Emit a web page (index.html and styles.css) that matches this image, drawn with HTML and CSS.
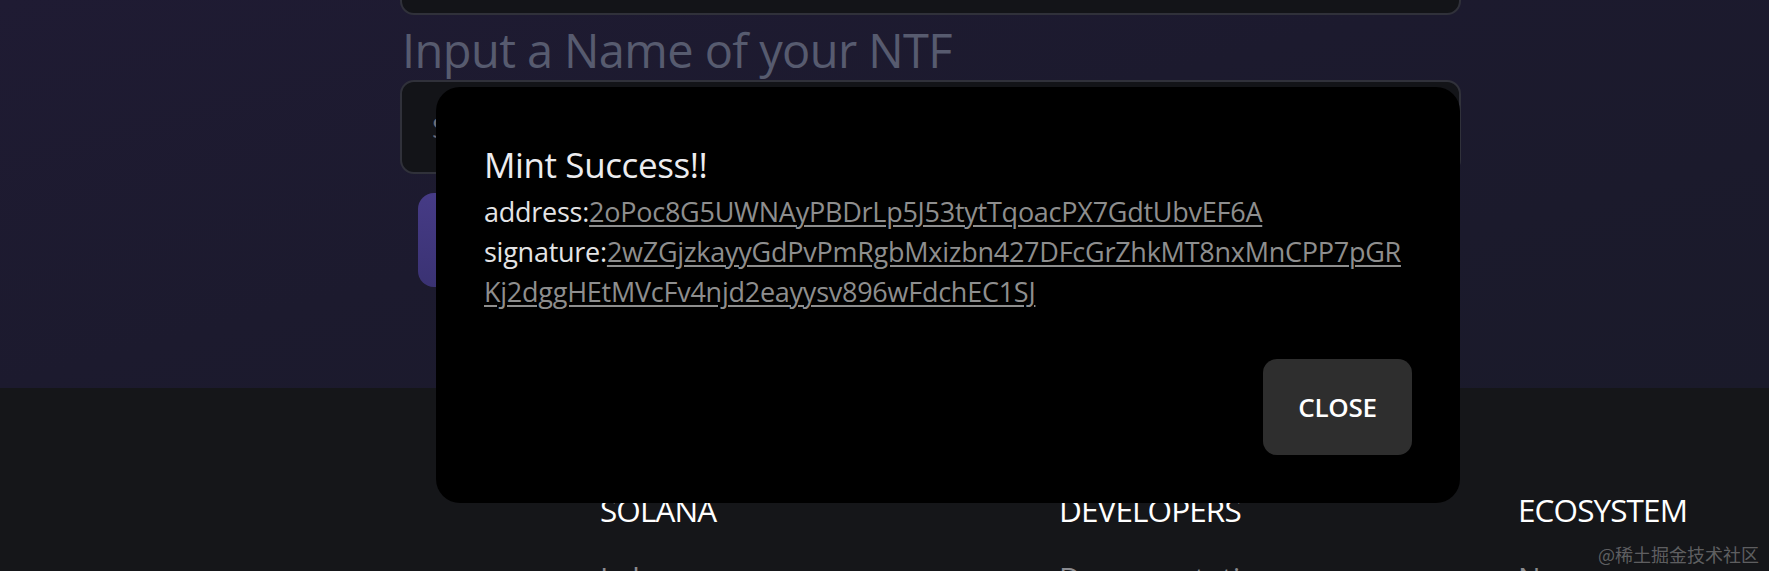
FILE: index.html
```html
<!DOCTYPE html>
<html lang="en">
<head>
<meta charset="utf-8">
<title>Mint NFT</title>
<link rel="stylesheet" href="styles.css">
</head>
<body>
<div class="page">
  <section class="hero">
    <div class="form">
      <div class="field field-top"></div>
      <label class="label">Input a Name of your NTF</label>
      <div class="field field-name"><span class="placeholder">SolanaNFT</span></div>
      <button class="mint-btn">MINT</button>
    </div>
  </section>
  <footer class="footer">
    <div class="cols">
      <div class="col">
        <h3 class="col-title">SOLANA</h3>
        <a class="col-link">Labs</a>
      </div>
      <div class="col">
        <h3 class="col-title">DEVELOPERS</h3>
        <a class="col-link">Documentation</a>
      </div>
      <div class="col">
        <h3 class="col-title">ECOSYSTEM</h3>
        <a class="col-link">News</a>
      </div>
    </div>
  </footer>
  <div class="dialog">
    <div class="dialog-body">
      <h2 class="dialog-title">Mint Success!!</h2>
      <p class="row">address:<a class="hash">2oPoc8G5UWNAyPBDrLp5J53tytTqoacPX7GdtUbvEF6A</a></p>
      <p class="row">signature:<a class="hash">2wZGjzkayyGdPvPmRgbMxizbn427DFcGrZhkMT8nxMnCPP7pGRKj2dggHEtMVcFv4njd2eayysv896wFdchEC1SJ</a></p>
    </div>
    <div class="dialog-actions">
      <button class="close-btn">CLOSE</button>
    </div>
  </div>
  <div class="watermark">@稀土掘金技术社区</div>
</div>
</body>
</html>
```
FILE: styles.css
```css
* { box-sizing: border-box; }
html, body { margin: 0; padding: 0; }
body {
  width: 1769px;
  height: 571px;
  overflow: hidden;
  background: #151619;
  font-family: "Open Sans", "Noto Sans", sans-serif;
}
.page {
  position: relative;
  width: 1769px;
  height: 571px;
  overflow: hidden;
}
.hero {
  height: 388px;
  background: linear-gradient(165deg, #1f1b33 0%, #1c1a2e 45%, #1a1a2a 100%);
  overflow: hidden;
}
.form {
  margin-left: 400px;
  width: 1061px;
  display: flex;
  flex-direction: column;
}
.field {
  background: #131418;
  border: 2px solid #30313a;
  border-radius: 14px;
}
.field-top {
  height: 80px;
  margin-top: -65px;
}
.label {
  display: block;
  color: #575b6f;
  font-size: 47px;
  line-height: 64px;
  letter-spacing: -0.6px;
  margin: 3px 0 -2px 2px;
}
.field-name {
  height: 94px;
  display: flex;
  align-items: center;
  padding-left: 30px;
}
.placeholder {
  color: #6d6d78;
  font-size: 28px;
}
.mint-btn {
  margin: 19px 0 0 18px;
  width: 320px;
  height: 94px;
  border: none;
  border-radius: 16px;
  background: linear-gradient(180deg, #463b86, #3a3273);
  color: #fff;
  font-family: inherit;
  font-size: 28px;
}
.footer {
  height: 183px;
}
.cols {
  display: grid;
  grid-template-columns: repeat(3, 459px);
  margin-left: 600px;
  padding-top: 102px;
}
.col {
  display: flex;
  flex-direction: column;
  gap: 28px;
}
.col-title {
  margin: 0;
  color: #ffffff;
  font-weight: 400;
  font-size: 31.5px;
  line-height: 40px;
  letter-spacing: -0.9px;
}
.col-link {
  color: #8a8b90;
  font-size: 30px;
  line-height: 40px;
}
.dialog {
  position: absolute;
  left: 436px;
  top: 87px;
  width: 1024px;
  height: 416px;
  background: #000;
  border-radius: 24px;
  display: flex;
  flex-direction: column;
}
.dialog-body {
  padding: 56px 54px 0 48px;
}
.dialog-title {
  margin: 0;
  color: #ececef;
  font-weight: 400;
  font-size: 35px;
  line-height: 44px;
  letter-spacing: -0.4px;
}
.row {
  margin: 0;
  color: #e4e4e6;
  font-size: 27px;
  line-height: 40px;
  letter-spacing: -0.25px;
  word-break: break-all;
}
.row:first-of-type { margin-top: 5px; }
.hash {
  color: #8e8e8e;
  text-decoration: underline;
  text-decoration-thickness: 2px;
  text-underline-offset: 3px;
}
.dialog-actions {
  margin-top: auto;
  display: flex;
  justify-content: flex-end;
  padding: 0 48px 48px 0;
}
.close-btn {
  width: 149px;
  height: 96px;
  border: none;
  border-radius: 14px;
  background: #2e2e2e;
  color: #fff;
  font-family: inherit;
  font-weight: 600;
  font-size: 26px;
  letter-spacing: -0.3px;
}
.watermark {
  position: absolute;
  right: 10px;
  top: 543px;
  font-family: "Noto Sans CJK SC", sans-serif;
  font-size: 18px;
  line-height: 22px;
  color: rgba(255,255,255,0.33);
}
```
